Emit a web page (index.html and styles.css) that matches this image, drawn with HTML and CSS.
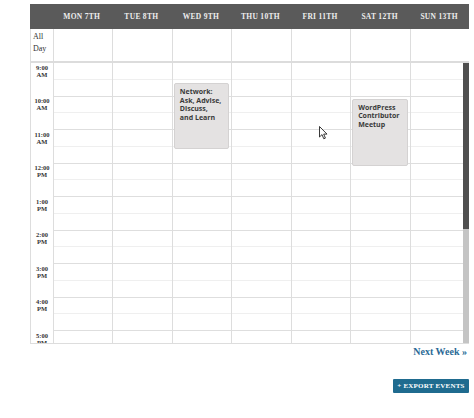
FILE: index.html
```html
<!DOCTYPE html>
<html lang="en">
<head>
  <meta charset="UTF-8">
  <meta name="viewport" content="width=device-width, initial-scale=1.0">
  <title>Week View</title>
  <link rel="stylesheet" href="styles.css">
</head>
<body>
  <div class="calendar">
    <div class="cal-head">
      <div class="axis"></div>
      <div class="day-name">Mon 7th</div>
      <div class="day-name">Tue 8th</div>
      <div class="day-name">Wed 9th</div>
      <div class="day-name">Thu 10th</div>
      <div class="day-name">Fri 11th</div>
      <div class="day-name">Sat 12th</div>
      <div class="day-name">Sun 13th</div>
    </div>

    <div class="allday">
      <div class="axis allday-label">All<br>Day</div>
      <div class="allday-cell"></div>
      <div class="allday-cell"></div>
      <div class="allday-cell"></div>
      <div class="allday-cell"></div>
      <div class="allday-cell"></div>
      <div class="allday-cell"></div>
      <div class="allday-cell"></div>
    </div>

    <div class="timegrid">
      <div class="slats" id="slats"></div>

      <div class="day-cols">
        <div class="day-col"></div>
        <div class="day-col"></div>
        <div class="day-col">
          <div class="event event-network">Network:<br>Ask, Advise,<br>Discuss,<br>and Learn</div>
        </div>
        <div class="day-col"></div>
        <div class="day-col"></div>
        <div class="day-col">
          <div class="event event-wp">WordPress<br>Contributor<br>Meetup</div>
        </div>
        <div class="day-col"></div>
      </div>

      <!-- scrollbar drawn by hand, the grid is scrolled to the top -->
      <div class="scrollbar"><div class="scroll-thumb"></div></div>
    </div>
  </div>

  <div class="week-nav">
    <a href="#" class="next-week">Next Week &raquo;</a>
  </div>

  <div class="export">
    <a href="#" class="btn-export">+ Export Events</a>
  </div>

  <!-- mouse pointer caught in the screenshot -->
  <svg class="cursor" width="9" height="14" viewBox="0 0 9 14">
    <path d="M0.5 0.5 L0.5 11 L3 8.6 L4.8 12.8 L6.4 12.1 L4.7 8.1 L8 8.1 Z" fill="#fff" stroke="#222" stroke-width="0.9" stroke-linejoin="round"/>
  </svg>

  <script>
    // Build the half-hour rows from 9 AM on
    const slats = document.getElementById("slats");
    for (let h = 9; h < 18; h++) {
      const hour = h > 12 ? h - 12 : h;
      const ampm = h < 12 ? "AM" : "PM";
      for (let half = 0; half < 2; half++) {
        const row = document.createElement("div");
        row.className = half ? "slat half" : "slat";
        const time = document.createElement("div");
        time.className = "slat-time";
        if (!half) time.innerHTML = hour + ":00<br>" + ampm;
        const lane = document.createElement("div");
        lane.className = "slat-lane";
        row.appendChild(time);
        row.appendChild(lane);
        slats.appendChild(row);
      }
    }
  </script>
</body>
</html>
```

FILE: styles.css
```css
* {
  box-sizing: border-box;
  margin: 0;
  padding: 0;
}

body {
  font-family: "Liberation Serif", Georgia, serif;
  background-color: #fff;
  color: #333;
  position: relative;
  height: 418px;
  overflow: hidden;
}

.calendar {
  margin: 4px 5px 0 30px;
  width: 439px;
  border-left: 1px solid #ddd;
  border-bottom: 1px solid #ddd;
}

.cal-head {
  display: grid;
  grid-template-columns: 22px repeat(7, 1fr);
  height: 25px;
  background: #5a5a5a;
  margin-left: -1px;
}

.day-name {
  color: #eeeeee;
  font-size: 7.5px;
  font-weight: bold;
  text-transform: uppercase;
  letter-spacing: 0.3px;
  display: flex;
  align-items: center;
  justify-content: center;
}

.allday {
  display: grid;
  grid-template-columns: 22px repeat(7, 1fr);
  height: 34px;
  border-bottom: 2px solid #dcdcdc;
}

.allday-label {
  font-size: 8px;
  line-height: 12px;
  padding: 2px 0 0 2px;
  color: #333;
}

.allday-cell {
  border-left: 1px solid #ddd;
}

.timegrid {
  position: relative;
  height: 280px;
  overflow: hidden;
}

.slat {
  display: flex;
  height: 16.75px;
}

.slat-time {
  width: 22px;
  font-size: 6.5px;
  font-weight: bold;
  line-height: 7px;
  text-align: center;
  padding-top: 0.5px;
  color: #333;
}

.slat-lane {
  flex: 1;
  border-bottom: 1px solid #efefef;
}

.slat.half .slat-lane {
  border-bottom-color: #dedede;
}

.day-cols {
  position: absolute;
  top: 0;
  bottom: 0;
  left: 22px;
  right: 0;
  display: grid;
  grid-template-columns: repeat(7, 1fr);
}

.day-col {
  position: relative;
  border-left: 1px solid #ddd;
}

.event {
  position: absolute;
  left: 1px;
  right: 2px;
  background: #e4e2e2;
  border: 1px solid #d4d2d2;
  border-radius: 2px;
  font-family: "Open Sans", "Noto Sans", sans-serif;
  font-size: 7px;
  font-weight: bold;
  line-height: 8.6px;
  color: #3a3a3a;
  padding: 4px 5px;
}

.event-network {
  top: 20px;
  height: 66px;
}

.event-wp {
  top: 36px;
  height: 67px;
  padding-top: 3.5px;
}

.scrollbar {
  position: absolute;
  top: 0;
  right: 0;
  bottom: 0;
  width: 6px;
  background: #c4c4c4;
}

.scroll-thumb {
  height: 166px;
  background: #4f4f4f;
}

.week-nav {
  width: 469px;
  text-align: right;
  padding: 2px 2px 0 0;
  font-size: 10px;
  line-height: 12px;
}

.next-week {
  font-weight: bold;
  color: #2a6a96;
  text-decoration: none;
}

.export {
  width: 469px;
  text-align: right;
  margin-top: 21px;
  font-size: 7px;
  line-height: 14px;
}

.btn-export {
  display: inline-block;
  vertical-align: top;
  height: 14px;
  width: 76px;
  text-align: center;
  background: #1f6b8f;
  color: #fff;
  font-weight: bold;
  letter-spacing: 0.2px;
  text-transform: uppercase;
  text-decoration: none;
  border-radius: 1px;
}

.cursor {
  position: absolute;
  left: 319px;
  top: 126px;
}
```
